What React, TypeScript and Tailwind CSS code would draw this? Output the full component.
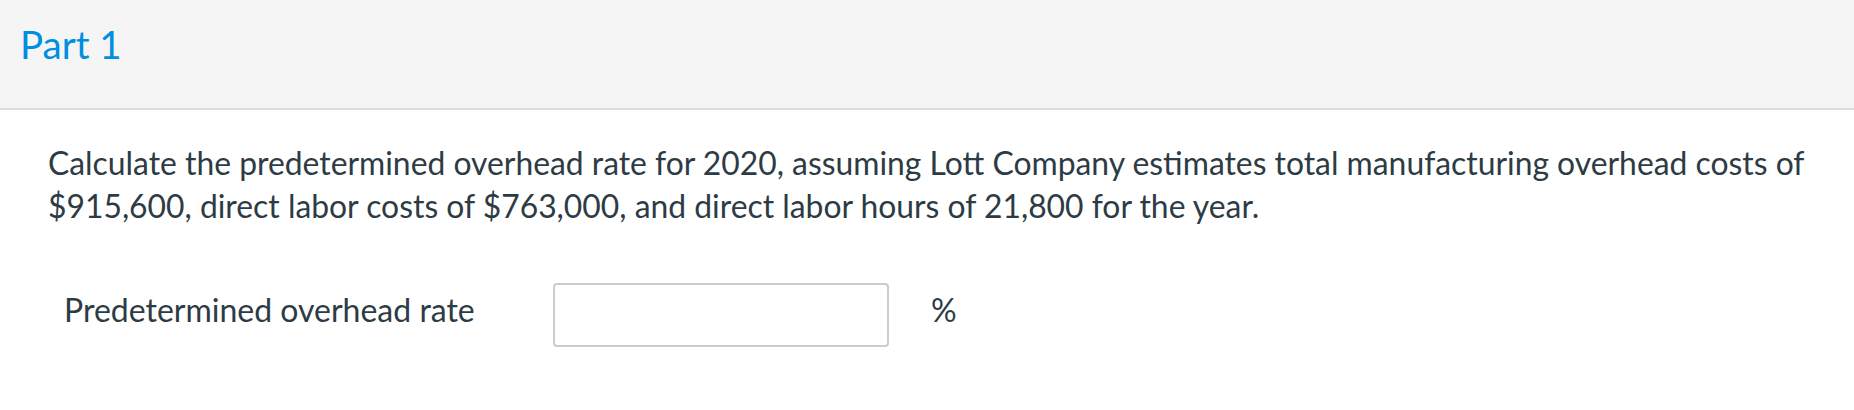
import React from "react";

const font = { fontFamily: "Lato, 'Liberation Sans', sans-serif" };

export default function App() {
  return (
    <div className="min-h-[410px] w-full bg-white" style={font}>
      {/* header bar */}
      <div className="h-[110px] border-b-2 border-[#dddddd] bg-[#f5f5f5] pl-[20px] pt-[25px]">
        <h2 className="text-[38.5px] font-normal leading-none text-[#008ee2]">Part 1</h2>
      </div>

      {/* question body */}
      <div className="pl-[48px] pr-[40px] pt-[32px]">
        <p className="text-[31.85px] leading-[43px] text-[#2d3b45]">
          Calculate the predetermined overhead rate for 2020, assuming Lott Company estimates total manufacturing
          overhead costs of $915,600, direct labor costs of $763,000, and direct labor hours of 21,800 for the year.
        </p>

        <div className="mt-[55px] flex items-start pl-[16px]">
          <div className="mt-[11px] w-[489px] shrink-0 text-[32px] leading-[32px] text-[#2d3b45]">
            Predetermined overhead rate
          </div>
          <input
            type="text"
            className="h-[64px] w-[336px] rounded-[4px] border-2 border-[#cccccc] bg-white px-3 text-[28px] text-[#2d3b45] outline-none"
          />
          <div className="ml-[42px] mt-[11px] text-[32px] leading-[32px] text-[#2d3b45]">%</div>
        </div>
      </div>
    </div>
  );
}
